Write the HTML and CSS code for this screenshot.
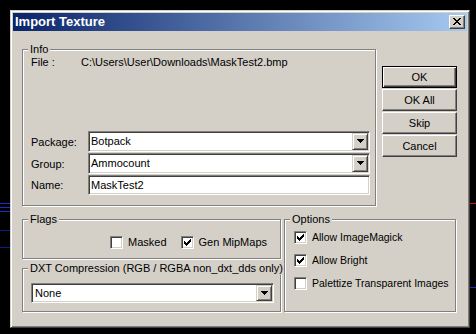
FILE: index.html
```html
<!DOCTYPE html>
<html>
<head>
<meta charset="utf-8">
<title>Import Texture</title>
<link rel="stylesheet" href="styles.css">
</head>
<body>
<div class="desktop">
  <div class="window">
    <div class="titlebar">
      <span class="title">Import Texture</span>
      <span class="close-btn"><svg width="8" height="7" viewBox="0 0 8 7"><path fill="#000" d="M0 0h2v1h-2z M6 0h2v1h-2z M1 1h2v1h-2z M5 1h2v1h-2z M2 2h4v1h-4z M3 3h2v1h-2z M2 4h4v1h-4z M1 5h2v1h-2z M5 5h2v1h-2z M0 6h2v1h-2z M6 6h2v1h-2z"/></svg></span>
    </div>
    <div class="client">
      <div class="top-row">
        <fieldset class="group info">
          <legend>Info</legend>
          <div class="info-body">
            <div class="file-row"><span class="file-label">File :</span><span>C:\Users\User\Downloads\MaskTest2.bmp</span></div>
            <div class="form">
              <span class="lbl">Package:</span>
              <div class="combo sunken"><span class="val">Botpack</span><span class="dd raised-dd"><svg width="7" height="4" viewBox="0 0 7 4"><path fill="#000" d="M0 0h7v1h-7z M1 1h5v1h-5z M2 2h3v1h-3z M3 3h1v1h-1z"/></svg></span></div>
              <span class="lbl">Group:</span>
              <div class="combo sunken"><span class="val">Ammocount</span><span class="dd raised-dd"><svg width="7" height="4" viewBox="0 0 7 4"><path fill="#000" d="M0 0h7v1h-7z M1 1h5v1h-5z M2 2h3v1h-3z M3 3h1v1h-1z"/></svg></span></div>
              <span class="lbl">Name:</span>
              <div class="edit sunken"><span class="val">MaskTest2</span></div>
            </div>
          </div>
        </fieldset>
        <div class="buttons">
          <div class="btn default">OK</div>
          <div class="btn">OK All</div>
          <div class="btn">Skip</div>
          <div class="btn">Cancel</div>
        </div>
      </div>
      <div class="bottom-row">
        <div class="left-stack">
          <fieldset class="group flags">
            <legend>Flags</legend>
            <div class="flags-body">
              <div class="check"><span class="box sunken"></span><span>Masked</span></div>
              <div class="check"><span class="box sunken"><svg width="7" height="7" viewBox="0 0 7 7"><path fill="#000" d="M6 0h1v1h-1z M5 1h2v1h-2z M0 2h1v1h-1z M4 2h3v1h-3z M0 3h2v1h-2z M3 3h3v1h-3z M0 4h5v1h-5z M1 5h3v1h-3z M2 6h1v1h-1z"/></svg></span><span>Gen MipMaps</span></div>
            </div>
          </fieldset>
          <fieldset class="group dxt">
            <legend>DXT Compression (RGB / RGBA non_dxt_dds only)</legend>
            <div class="dxt-body">
              <div class="combo dxt-combo sunken"><span class="val">None</span><span class="dd raised-dd"><svg width="7" height="4" viewBox="0 0 7 4"><path fill="#000" d="M0 0h7v1h-7z M1 1h5v1h-5z M2 2h3v1h-3z M3 3h1v1h-1z"/></svg></span></div>
            </div>
          </fieldset>
        </div>
        <fieldset class="group options">
          <legend>Options</legend>
          <div class="options-body">
            <div class="check"><span class="box sunken"><svg width="7" height="7" viewBox="0 0 7 7"><path fill="#000" d="M6 0h1v1h-1z M5 1h2v1h-2z M0 2h1v1h-1z M4 2h3v1h-3z M0 3h2v1h-2z M3 3h3v1h-3z M0 4h5v1h-5z M1 5h3v1h-3z M2 6h1v1h-1z"/></svg></span><span>Allow ImageMagick</span></div>
            <div class="check"><span class="box sunken"><svg width="7" height="7" viewBox="0 0 7 7"><path fill="#000" d="M6 0h1v1h-1z M5 1h2v1h-2z M0 2h1v1h-1z M4 2h3v1h-3z M0 3h2v1h-2z M3 3h3v1h-3z M0 4h5v1h-5z M1 5h3v1h-3z M2 6h1v1h-1z"/></svg></span><span>Allow Bright</span></div>
            <div class="check"><span class="box sunken"></span><span>Palettize Transparent Images</span></div>
          </div>
        </fieldset>
      </div>
    </div>
  </div>
</div>
</body>
</html>
```

FILE: styles.css
```css
* { box-sizing: border-box; }

body {
  margin: 0;
  background: #000;
  font-family: "Liberation Sans", Arial, sans-serif;
  font-size: 11px;
  color: #000;
}

.desktop {
  width: 476px;
  height: 334px;
  padding: 10px;
  background-color: #000;
  background-image:
    linear-gradient(#1c2cc8, #1c2cc8),
    linear-gradient(#1c2cc8, #1c2cc8),
    linear-gradient(#1c2cc8, #1c2cc8),
    linear-gradient(#101890, #101890),
    linear-gradient(#101890, #101890),
    linear-gradient(#1c2cc8, #1c2cc8),
    linear-gradient(#c01818, #c01818);
  background-size: 10px 1px, 10px 1px, 10px 1px, 10px 1px, 10px 1px, 6px 1px, 6px 1px;
  background-position: 0 203px, 0 207px, 0 211px, 0 230px, 0 247px, 470px 287px, 470px 203px;
  background-repeat: no-repeat;
}

.window {
  width: 460px;
  height: 318px;
  background: #d4d0c8;
  border: 1px solid;
  border-color: #d4d0c8 #404040 #404040 #d4d0c8;
  box-shadow: inset 1px 1px #fff, inset -1px -1px #808080;
  padding: 2px;
  display: flex;
  flex-direction: column;
}

.titlebar {
  height: 18px;
  flex: none;
  background: linear-gradient(to right, #0a246a, #a6caf0);
  display: flex;
  align-items: center;
  justify-content: space-between;
  padding: 0 2px;
}

.title {
  color: #fff;
  font-weight: bold;
  font-size: 13px;
  line-height: 18px;
}

.close-btn {
  width: 16px;
  height: 14px;
  background: #d4d0c8;
  border: 1px solid;
  border-color: #fff #404040 #404040 #fff;
  box-shadow: inset -1px -1px #808080;
  display: flex;
  align-items: center;
  justify-content: center;
  padding-bottom: 1px;
}
.close-btn svg { display: block; }

.client {
  flex: 1;
  margin-top: 1px;
  padding: 11px 0 0 9px;
}

.top-row {
  display: flex;
  align-items: flex-start;
  gap: 6px;
}

.group {
  margin: 0;
  padding: 0;
  min-width: 0;
  border: 1px solid #808080;
  box-shadow: inset 1px 1px #fff, 1px 1px #fff;
}

.group legend {
  margin-left: 5px;
  padding: 0 2px;
  line-height: 13px;
  font-size: 11px;
  white-space: nowrap;
  background: #d4d0c8;
}

.info { width: 354px; height: 163px; }

.info-body { padding: 0 5px 0 8px; }

.file-row {
  display: flex;
  height: 13px;
  line-height: 13px;
}
.file-label { width: 50px; flex: none; }

.form {
  margin-top: 62px;
  display: grid;
  grid-template-columns: 57px 1fr;
  grid-template-rows: 21px 21px 20px;
  row-gap: 1px;
  align-items: center;
}

.sunken {
  border: 1px solid;
  border-color: #808080 #fff #fff #808080;
  box-shadow: inset 1px 1px #404040, inset -1px -1px #d4d0c8;
  background: #fff;
}

.combo, .edit {
  height: 100%;
  display: flex;
  align-items: center;
}
.val { flex: 1; padding-left: 2px; line-height: 13px; }

.dd {
  width: 16px;
  align-self: stretch;
  margin: 1px;
  display: flex;
  align-items: center;
  justify-content: center;
  padding-bottom: 1px;
}
.dd svg { display: block; }

.raised-dd {
  background: #d4d0c8;
  border: 1px solid;
  border-color: #d4d0c8 #404040 #404040 #d4d0c8;
  box-shadow: inset 1px 1px #fff, inset -1px -1px #808080;
}

.buttons {
  width: 75px;
  margin-top: 23px;
  display: flex;
  flex-direction: column;
  gap: 1px;
}

.btn {
  height: 22px;
  line-height: 20px;
  text-align: center;
  background: #d4d0c8;
  border: 1px solid;
  border-color: #fff #404040 #404040 #fff;
  box-shadow: inset -1px -1px #808080;
}
.btn.default {
  border-color: #000;
  box-shadow: inset 1px 1px #fff, inset -1px -1px #404040, inset -2px -2px #808080;
}

.bottom-row {
  display: flex;
  gap: 3px;
  margin-top: 7px;
}

.left-stack {
  width: 259px;
  display: flex;
  flex-direction: column;
  gap: 3px;
}

.flags { height: 46px; }
.dxt { height: 50px; }
.options { width: 172px; height: 99px; }

.flags-body {
  display: flex;
  gap: 14px;
  padding: 10px 0 0 87px;
}

.check {
  display: flex;
  align-items: center;
  gap: 5px;
  height: 13px;
  line-height: 13px;
  white-space: nowrap;
}

.box {
  width: 13px;
  height: 13px;
  flex: none;
  padding: 2px 0 0 2px;
}
.box svg { display: block; }

.dxt-body { padding: 8px 6px 0 8px; }
.dxt-combo { height: 20px; }
.dxt-combo .val { padding-left: 3px; }

.options-body {
  display: flex;
  flex-direction: column;
  gap: 10px;
  padding: 5px 0 0 9px;
  font-size: 10.5px;
}
```
